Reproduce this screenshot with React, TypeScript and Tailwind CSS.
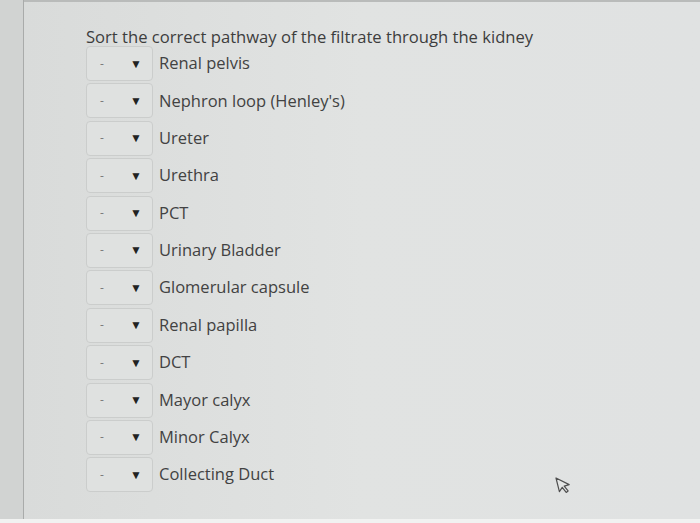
const items = [
  "Renal pelvis",
  "Nephron loop (Henley's)",
  "Ureter",
  "Urethra",
  "PCT",
  "Urinary Bladder",
  "Glomerular capsule",
  "Renal papilla",
  "DCT",
  "Mayor calyx",
  "Minor Calyx",
  "Collecting Duct",
];

function Cursor() {
  return (
    <svg
      className="absolute left-[554px] top-[477px]"
      width="18"
      height="20"
      viewBox="0 0 18 20"
    >
      <path
        d="M2 1 L2 15 L5.8 11.6 L8.4 17.5 L10.6 16.5 L8 10.8 L13.2 10.6 Z"
        fill="#e4e6e5"
        stroke="#4f4f4f"
        strokeWidth="1.2"
        strokeLinejoin="round"
        transform="rotate(-14 2 1)"
      />
    </svg>
  );
}

function SortRow({ label }: { label: string }) {
  return (
    <div className="flex items-center">
      <div className="w-[67px] h-[35px] flex items-center justify-between pl-[13px] pr-[10px] border border-[#cbcdcc] rounded-[4px] bg-[#dfe1e0]">
        <span className="text-[12px] text-[#7a7a7a]">-</span>
        <span className="text-[12px] text-[#222] leading-none">▼</span>
      </div>
      <span className="ml-[6px] text-[16.5px] text-[#424242]">{label}</span>
    </div>
  );
}

export default function App() {
  return (
    <div
      className="relative w-[700px] h-[523px] flex bg-[#dcdedd] overflow-hidden"
      style={{ fontFamily: '"Open Sans", "Noto Sans", sans-serif' }}
    >
      <div className="w-[24px] h-full bg-[#d1d3d2] border-r border-[#a9abaa]" />
      <div className="flex-1 flex flex-col bg-gradient-to-r from-[#d9dbda] via-[#e1e3e2] to-[#e0e2e2] border-t-[2px] border-[#b9bbba] pl-[62px] pt-[24px]">
        <h1 className="text-[16.6px] text-[#3d3d3d] leading-[22px]">
          Sort the correct pathway of the filtrate through the kidney
        </h1>
        <div className="flex flex-col gap-[2.4px] mt-[-2px]">
          {items.map((item, i) => (
            <SortRow key={i} label={item} />
          ))}
        </div>
      </div>
      <div className="absolute left-0 bottom-0 w-full h-[4px] bg-[#f1f2f1]" />
      <Cursor />
    </div>
  );
}
